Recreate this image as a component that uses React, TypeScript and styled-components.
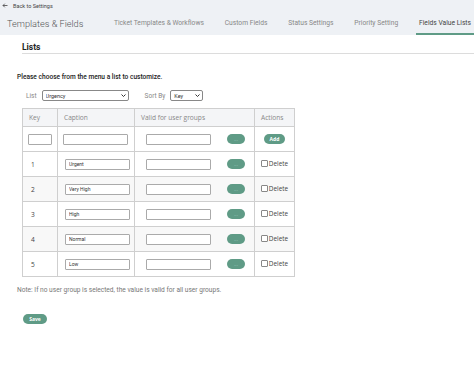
import styled, { createGlobalStyle } from "styled-components";

const GlobalStyle = createGlobalStyle`
  body {
    margin: 0;
    background: #ffffff;
    font-family: Roboto, "Liberation Sans", sans-serif;
    color: #333;
  }
`;

const TopBar = styled.div`
  background: #eef1f5;
  height: 35px;
  display: flex;
  flex-direction: column;
`;
const BackRow = styled.div`
  height: 11px;
  display: flex;
  align-items: center;
  padding-left: 2px;
  font-size: 5.5px;
  color: #444;
  gap: 5px;
`;
const TitleRow = styled.div`
  height: 24px;
  display: flex;
  align-items: stretch;
`;
const PageTitle = styled.div`
  font-size: 9.2px;
  font-weight: 300;
  color: #555;
  padding-left: 7px;
  width: 104px;
  display: flex;
  align-items: center;
  padding-top: 1px;
`;
const Tabs = styled.div`
  display: flex;
  flex: 1;
  justify-content: space-between;
`;
const Tab = styled.div<{ active?: boolean }>`
  display: flex;
  align-items: center;
  padding: 2px 3px 0;
  font-size: 6.7px;
  color: ${(p) => (p.active ? "#444" : "#888")};
  border-bottom: 2px solid ${(p) => (p.active ? "#5f9b86" : "transparent")};
  white-space: nowrap;
`;

const SectionTitle = styled.div`
  margin-left: 22px;
  padding-top: 6px;
  line-height: 12px;
  font-size: 8.5px;
  font-weight: 700;
  color: #222;
  border-bottom: 1px solid #dcdcdc;
`;
const Content = styled.div`
  padding-left: 17px;
`;
const Intro = styled.div`
  margin-top: 17px;
  line-height: 12px;
  font-size: 6.6px;
  font-weight: 500;
  color: #222;
`;
const FilterRow = styled.div`
  margin-top: 7px;
  margin-left: 9px;
  height: 11px;
  display: flex;
  align-items: center;
  font-size: 6.5px;
  color: #888;
`;
const Label = styled.span`
  margin-right: 5px;
`;
const SelectBox = styled.div<{ w: number }>`
  position: relative;
  width: ${(p) => p.w}px;
  height: 11px;
  margin-right: 16px;
`;
const Select = styled.select`
  appearance: none;
  width: 100%;
  height: 100%;
  box-sizing: border-box;
  font-size: 5.5px;
  padding: 0 3px;
  border: 1px solid #888;
  border-radius: 2px;
  background: #fff;
  color: #333;
  font-family: Roboto, sans-serif;
`;
const Chevron = styled.svg`
  position: absolute;
  right: 3px;
  top: 4px;
  pointer-events: none;
`;

const Table = styled.table`
  margin-top: 7px;
  margin-left: 5px;
  border-collapse: collapse;
  table-layout: fixed;
  width: 272px;
  font-family: "Open Sans", Roboto, sans-serif;
  font-size: 6.6px;
  color: #444;
`;
const Th = styled.th`
  height: 17px;
  border: 1px solid #cfcfcf;
  background: #f4f5f7;
  font-weight: 400;
  color: #888;
  text-align: left;
  padding: 0 0 0 6px;
`;
const Tr = styled.tr<{ striped?: boolean }>`
  height: 25px;
  background: ${(p) => (p.striped ? "#f8f8f8" : "#fff")};
`;
const Td = styled.td<{ pl?: number; center?: boolean }>`
  border: 1px solid #cfcfcf;
  padding: 0 0 0 ${(p) => p.pl ?? 6}px;
  text-align: ${(p) => (p.center ? "center" : "left")};
  vertical-align: middle;
`;
const CellFlex = styled.div`
  display: flex;
  align-items: center;
`;
const TextInput = styled.input<{ w: number }>`
  width: ${(p) => p.w}px;
  height: 11px;
  box-sizing: border-box;
  border: 1px solid #aaa;
  border-radius: 1px;
  font-size: 5px;
  padding: 0 3px;
  color: #333;
  background: #fff;
  font-family: Roboto, sans-serif;
`;
const Pill = styled.button`
  margin-left: 16px;
  width: 18px;
  height: 10px;
  border-radius: 6px;
  border: none;
  background: #5f9b86;
  color: #a6d2c3;
  font-size: 5px;
  padding: 0;
  line-height: 10px;
`;
const GreenButton = styled.button<{ w: number }>`
  width: ${(p) => p.w}px;
  height: 10px;
  border-radius: 6px;
  border: none;
  background: #5f9b86;
  color: #fff;
  font-size: 5px;
  font-weight: 700;
  padding: 0;
  font-family: "Open Sans", sans-serif;
`;
const DeleteLabel = styled.label`
  display: inline-flex;
  align-items: center;
  font-size: 6.4px;
  color: #444;
`;
const Check = styled.span`
  width: 5px;
  height: 5px;
  border: 1px solid #888;
  border-radius: 1px;
  margin-right: 1px;
  background: #fff;
`;
const Note = styled.div`
  margin-top: 8px;
  line-height: 10px;
  font-size: 6.6px;
  color: #777;
`;
const SaveWrap = styled.div`
  margin-top: 11px;
  margin-left: 6px;
`;

const rows = ["Urgent", "Very High", "High", "Normal", "Low"];
const tabs = [
  "Ticket Templates & Workflows",
  "Custom Fields",
  "Status Settings",
  "Priority Setting",
  "Fields Value Lists",
];

function Dropdown({ w, value }: { w: number; value: string }) {
  return (
    <SelectBox w={w}>
      <Select defaultValue={value}>
        <option>{value}</option>
      </Select>
      <Chevron width="5" height="3" viewBox="0 0 5 3">
        <path d="M0.5 0.5L2.5 2.5L4.5 0.5" stroke="#333" strokeWidth="1" fill="none" />
      </Chevron>
    </SelectBox>
  );
}

function App() {
  return (
    <>
      <GlobalStyle />
      <TopBar>
        <BackRow>
          <svg width="6" height="5" viewBox="0 0 6 5">
            <path d="M5.5 2.5H1M2.8 0.7L1 2.5l1.8 1.8" stroke="#444" strokeWidth="0.8" fill="none" />
          </svg>
          Back to Settings
        </BackRow>
        <TitleRow>
          <PageTitle>Templates &amp; Fields</PageTitle>
          <Tabs>
            {tabs.map((t, i) => (
              <Tab key={t} active={i === tabs.length - 1}>
                {t}
              </Tab>
            ))}
          </Tabs>
        </TitleRow>
      </TopBar>
      <SectionTitle>Lists</SectionTitle>
      <Content>
        <Intro>Please choose from the menu a list to customize.</Intro>
        <FilterRow>
          <Label>List</Label>
          <Dropdown w={87} value="Urgency" />
          <Label>Sort By</Label>
          <Dropdown w={33} value="Key" />
        </FilterRow>
        <Table>
          <colgroup>
            <col style={{ width: 35 }} />
            <col style={{ width: 77 }} />
            <col style={{ width: 120 }} />
            <col style={{ width: 40 }} />
          </colgroup>
          <thead>
            <tr>
              <Th>Key</Th>
              <Th>Caption</Th>
              <Th>Valid for user groups</Th>
              <Th>Actions</Th>
            </tr>
          </thead>
          <tbody>
            <Tr>
              <Td pl={5}>
                <TextInput w={24} />
              </Td>
              <Td pl={5}>
                <TextInput w={65} />
              </Td>
              <Td pl={11}>
                <CellFlex>
                  <TextInput w={65} />
                  <Pill>...</Pill>
                </CellFlex>
              </Td>
              <Td pl={0} center>
                <GreenButton w={21}>Add</GreenButton>
              </Td>
            </Tr>
            {rows.map((r, i) => (
              <Tr key={r} striped={i % 2 === 1}>
                <Td pl={8}>{i + 1}</Td>
                <Td pl={7}>
                  <TextInput w={65} defaultValue={r} />
                </Td>
                <Td pl={11}>
                  <CellFlex>
                    <TextInput w={65} />
                    <Pill>...</Pill>
                  </CellFlex>
                </Td>
                <Td pl={0} center>
                  <DeleteLabel>
                    <Check />
                    Delete
                  </DeleteLabel>
                </Td>
              </Tr>
            ))}
          </tbody>
        </Table>
        <Note>Note: If no user group is selected, the value is valid for all user groups.</Note>
        <SaveWrap>
          <GreenButton w={24}>Save</GreenButton>
        </SaveWrap>
      </Content>
    </>
  );
}

export default App;
